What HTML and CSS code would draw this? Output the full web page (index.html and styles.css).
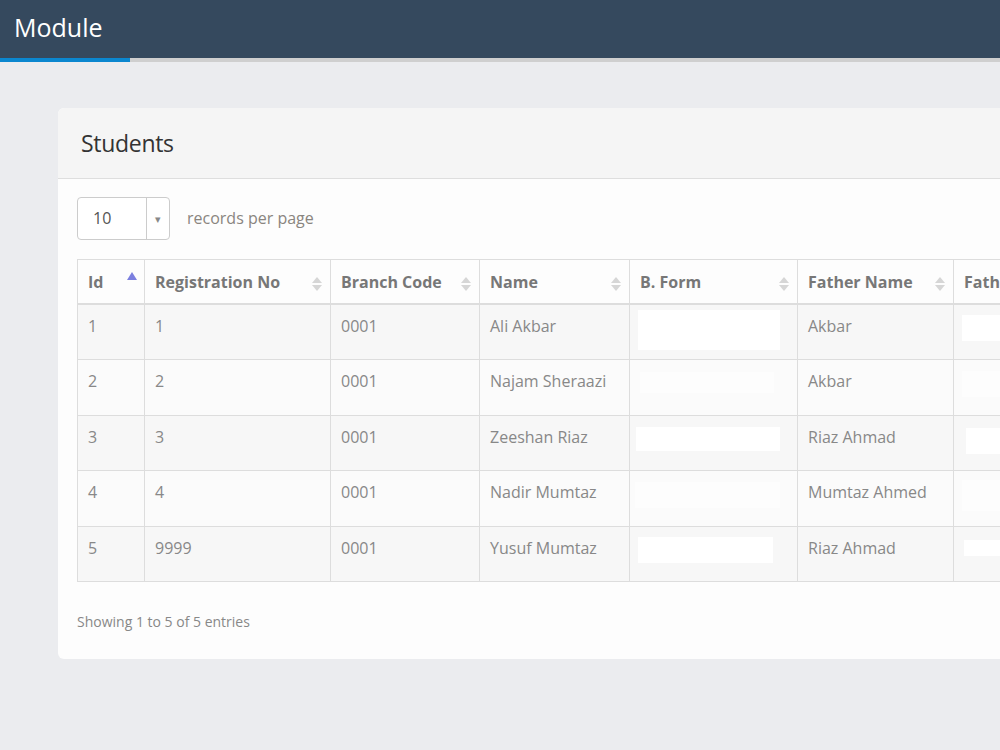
FILE: index.html
```html
<!DOCTYPE html>
<html lang="en">
<head>
    <meta charset="UTF-8">
    <meta name="viewport" content="width=device-width, initial-scale=1.0">
    <title>Module</title>
    <link rel="stylesheet" href="styles.css">
</head>
<body>
    <div class="topbar">
        <h1>Module</h1>
    </div>
    <div class="progress"><div class="progress-fill"></div></div>

    <div class="main">
        <div class="card">
            <div class="card-header">Students</div>
            <div class="card-body">
                <div class="length">
                    <div class="select">
                        <span class="select-value">10</span>
                        <span class="select-arrow">&#9662;</span>
                    </div>
                    <span class="length-label">records per page</span>
                </div>

                <table class="data-table">
                    <colgroup>
                        <col class="c-id">
                        <col class="c-reg">
                        <col class="c-branch">
                        <col class="c-name">
                        <col class="c-bform">
                        <col class="c-father">
                        <col class="c-more">
                    </colgroup>
                    <thead>
                        <tr>
                            <th class="sorted-asc">Id</th>
                            <th class="sortable">Registration No</th>
                            <th class="sortable">Branch Code</th>
                            <th class="sortable">Name</th>
                            <th class="sortable">B. Form</th>
                            <th class="sortable">Father Name</th>
                            <th class="sortable">Father CNIC</th>
                        </tr>
                    </thead>
                    <tbody>
                        <tr>
                            <td>1</td>
                            <td>1</td>
                            <td>0001</td>
                            <td>Ali Akbar</td>
                            <td class="pic-cell"><div class="pic pic-a"></div></td>
                            <td>Akbar</td>
                            <td class="pic-cell"><div class="pic pic-f1"></div></td>
                        </tr>
                        <tr>
                            <td>2</td>
                            <td>2</td>
                            <td>0001</td>
                            <td>Najam Sheraazi</td>
                            <td class="pic-cell"><div class="pic pic-b"></div></td>
                            <td>Akbar</td>
                            <td class="pic-cell"><div class="pic pic-f2"></div></td>
                        </tr>
                        <tr>
                            <td>3</td>
                            <td>3</td>
                            <td>0001</td>
                            <td>Zeeshan Riaz</td>
                            <td class="pic-cell"><div class="pic pic-c"></div></td>
                            <td>Riaz Ahmad</td>
                            <td class="pic-cell"><div class="pic pic-f3"></div></td>
                        </tr>
                        <tr>
                            <td>4</td>
                            <td>4</td>
                            <td>0001</td>
                            <td>Nadir Mumtaz</td>
                            <td class="pic-cell"><div class="pic pic-d"></div></td>
                            <td>Mumtaz Ahmed</td>
                            <td class="pic-cell"><div class="pic pic-f4"></div></td>
                        </tr>
                        <tr>
                            <td>5</td>
                            <td>9999</td>
                            <td>0001</td>
                            <td>Yusuf Mumtaz</td>
                            <td class="pic-cell"><div class="pic pic-e"></div></td>
                            <td>Riaz Ahmad</td>
                            <td class="pic-cell"><div class="pic pic-f5"></div></td>
                        </tr>
                    </tbody>
                </table>

                <div class="info">Showing 1 to 5 of 5 entries</div>
            </div>
        </div>
    </div>
</body>
</html>
```

FILE: styles.css
```css
body {
    font-family: "Open Sans", "Liberation Sans", sans-serif;
    background-color: #ebecef;
    margin: 0;
    overflow: hidden;
}
.topbar {
    height: 58px;
    background-color: #35495e;
    padding-left: 14px;
    display: flex;
    align-items: center;
}
.topbar h1 {
    margin: 0 0 5px 0;
    font-size: 25px;
    font-weight: 400;
    color: #ffffff;
}
.progress {
    height: 4px;
    background-color: #cfcfcf;
}
.progress-fill {
    width: 130px;
    height: 4px;
    background-color: #0b87cf;
}
.main {
    padding: 46px 0 0 58px;
}
.card {
    width: 1114px;
    background: #fdfdfd;
    border-radius: 6px;
    overflow: hidden;
}
.card-header {
    height: 71px;
    box-sizing: border-box;
    padding: 0 23px 1px;
    display: flex;
    align-items: center;
    background-color: #f5f5f5;
    border-bottom: 1px solid #dedede;
    font-size: 23px;
    color: #333333;
    letter-spacing: -0.3px;
}
.card-body {
    padding: 18px 19px 28px;
}
.length {
    display: flex;
    align-items: center;
}
.select {
    width: 93px;
    height: 43px;
    box-sizing: border-box;
    border: 1px solid #cccccc;
    border-radius: 4px;
    background: #ffffff;
    display: flex;
    align-items: stretch;
}
.select-value {
    flex: 1;
    display: flex;
    align-items: center;
    padding: 0 0 2px 15px;
    font-size: 16px;
    color: #555555;
}
.select-arrow {
    width: 22px;
    border-left: 1px solid #cccccc;
    display: flex;
    align-items: center;
    justify-content: center;
    font-size: 11px;
    color: #888888;
}
.length-label {
    margin: 0 0 2px 17px;
    font-size: 16px;
    color: #8a8580;
}
.data-table {
    margin-top: 19px;
    border-collapse: collapse;
    table-layout: fixed;
    width: 1076px;
    border: 1px solid #dddddd;
    font-size: 16px;
}
.c-id { width: 67px; }
.c-reg { width: 186px; }
.c-branch { width: 149px; }
.c-name { width: 150px; }
.c-bform { width: 168px; }
.c-father { width: 156px; }
.c-more { width: 200px; }
.data-table th {
    position: relative;
    height: 43px;
    padding: 0 10px;
    line-height: 20px;
    text-align: left;
    font-weight: 700;
    color: #777777;
    white-space: nowrap;
    overflow: hidden;
    background: #fdfdfd;
    border: 1px solid #dddddd;
    border-bottom: 2px solid #dddddd;
}
.data-table td {
    height: 55.6px;
    box-sizing: border-box;
    padding: 10px 10px 0;
    vertical-align: top;
    line-height: 22px;
    color: #888888;
    border: 1px solid #dddddd;
    white-space: nowrap;
}
.data-table tbody tr:nth-child(odd) td {
    background: #f7f7f7;
}
.data-table tbody tr:nth-child(even) td {
    background: #fbfbfb;
}
.sortable::before,
.sortable::after {
    content: "";
    position: absolute;
    right: 8px;
    border-left: 5px solid transparent;
    border-right: 5px solid transparent;
}
.sortable::before {
    top: 17px;
    border-bottom: 6px solid #d6d6d6;
}
.sortable::after {
    top: 25px;
    border-top: 6px solid #d6d6d6;
}
.sorted-asc::after {
    content: "";
    position: absolute;
    right: 7px;
    top: 12px;
    border-left: 5px solid transparent;
    border-right: 5px solid transparent;
    border-bottom: 8px solid #7b7fdf;
}
.data-table td.pic-cell {
    padding: 0 8px;
}
.pic {
    background: #ffffff;
}
.pic-a { width: 142px; height: 40px; margin-top: 5px; }
.pic-b { width: 134px; height: 21px; margin: 12px 0 0 2px; opacity: 0.6; }
.pic-c { width: 144px; height: 24px; margin: 11px 0 0 -2px; }
.pic-d { width: 145px; height: 26px; margin: 11px 0 0 -3px; opacity: 0.6; }
.pic-e { width: 135px; height: 26px; margin-top: 10px; }
.pic-f1 { width: 60px; height: 26px; margin-top: 10px; }
.pic-f2 { width: 60px; height: 26px; margin-top: 11px; opacity: 0.6; }
.pic-f3 { width: 60px; height: 26px; margin: 12px 0 0 4px; }
.pic-f4 { width: 60px; height: 31px; margin-top: 9px; opacity: 0.6; }
.pic-f5 { width: 60px; height: 16px; margin: 13px 0 0 2px; }
.info {
    margin-top: 30px;
    font-size: 14px;
    color: #888888;
}
```
